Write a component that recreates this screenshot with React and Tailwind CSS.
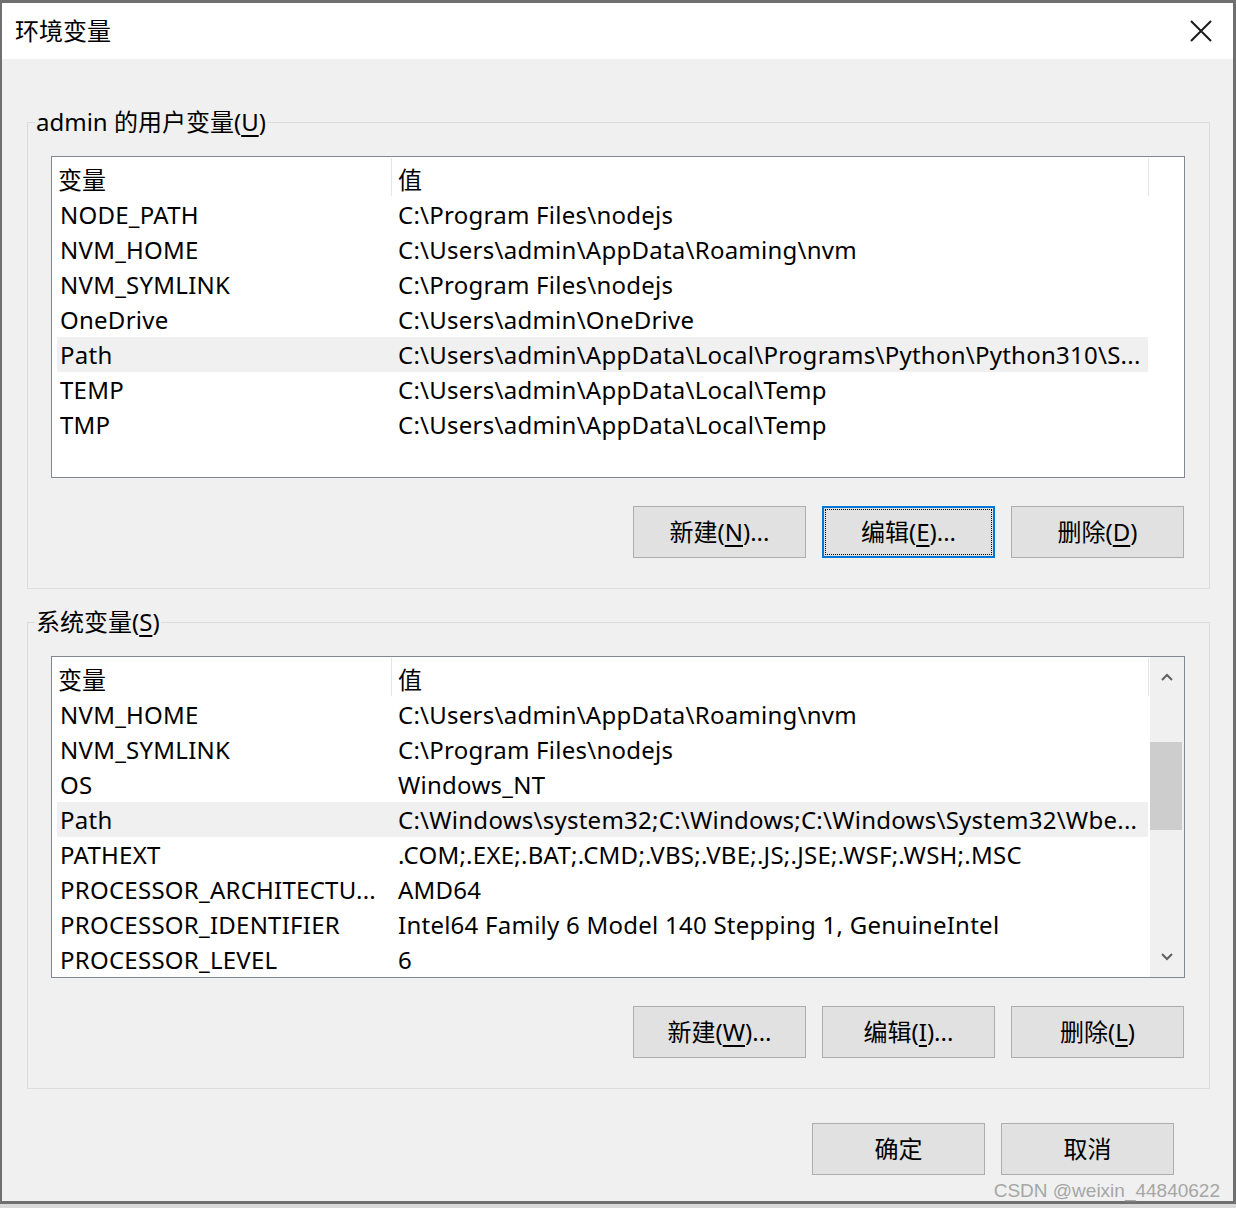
import React from "react";

const FONT = { fontFamily: '"Noto Sans", "Noto Sans CJK SC", sans-serif' };

const userRows = [
  ["NODE_PATH", "C:\\Program Files\\nodejs"],
  ["NVM_HOME", "C:\\Users\\admin\\AppData\\Roaming\\nvm"],
  ["NVM_SYMLINK", "C:\\Program Files\\nodejs"],
  ["OneDrive", "C:\\Users\\admin\\OneDrive"],
  ["Path", "C:\\Users\\admin\\AppData\\Local\\Programs\\Python\\Python310\\S...", true],
  ["TEMP", "C:\\Users\\admin\\AppData\\Local\\Temp"],
  ["TMP", "C:\\Users\\admin\\AppData\\Local\\Temp"],
];

const sysRows = [
  ["NVM_HOME", "C:\\Users\\admin\\AppData\\Roaming\\nvm"],
  ["NVM_SYMLINK", "C:\\Program Files\\nodejs"],
  ["OS", "Windows_NT"],
  ["Path", "C:\\Windows\\system32;C:\\Windows;C:\\Windows\\System32\\Wbe...", true],
  ["PATHEXT", ".COM;.EXE;.BAT;.CMD;.VBS;.VBE;.JS;.JSE;.WSF;.WSH;.MSC"],
  ["PROCESSOR_ARCHITECTU...", "AMD64"],
  ["PROCESSOR_IDENTIFIER", "Intel64 Family 6 Model 140 Stepping 1, GenuineIntel"],
  ["PROCESSOR_LEVEL", "6"],
];

function Chevron({ up }) {
  return (
    <svg width="14" height="10" viewBox="0 0 14 10">
      <path
        d={up ? "M2 8 L7 3 L12 8" : "M2 2 L7 7 L12 2"}
        fill="none"
        stroke="#606060"
        strokeWidth="2"
      />
    </svg>
  );
}

function ListBox({ rows, scroll }) {
  return (
    <div className="flex h-[322px] w-[1134px] shrink-0 border border-[#828790] bg-white">
      <div className="flex w-[1098px] flex-col overflow-hidden">
        <div className="ml-[5px] flex h-[40px] w-[1092px] shrink-0 items-start text-[24px] text-black">
          <div className="h-[40px] w-[334px] pl-[1px] leading-[46px]">变量</div>
          <div className="mt-[1px] h-[38px] w-px bg-[#e5e5e5]" />
          <div className="h-[40px] flex-1 pl-[6px] leading-[46px]">值</div>
          <div className="mt-[1px] h-[38px] w-px bg-[#e5e5e5]" />
        </div>
        {rows.map(([k, v, sel]) => (
          <div
            key={k}
            className={
              "ml-[5px] flex h-[35px] w-[1091px] shrink-0 items-center whitespace-nowrap text-[24px] leading-[35px] tracking-[0.25px] text-black " +
              (sel ? "bg-[#f0f0f0]" : "")
            }
          >
            <div className="w-[334px] overflow-hidden pl-[3px]">{k}</div>
            <div className="flex-1 overflow-hidden pl-[7px]">{v}</div>
          </div>
        ))}
      </div>
      {scroll && (
        <div className="ml-auto flex w-[34px] flex-col items-center bg-[#f0f0f0]">
          <div className="flex h-[40px] w-full items-center justify-center">
            <Chevron up />
          </div>
          <div className="mt-[45px] h-[88px] w-[32px] self-start bg-[#cdcdcd]" />
          <div className="flex-1" />
          <div className="flex h-[40px] w-full items-center justify-center">
            <Chevron />
          </div>
        </div>
      )}
    </div>
  );
}

function Btn({ children, focused }) {
  if (focused) {
    return (
      <div className="flex h-[52px] w-[173px] items-center justify-center border-2 border-[#0078d7] bg-[#e1e1e1] p-[1px]">
        <div className="flex h-full w-full items-center justify-center border border-dotted border-black text-[24px] text-black">
          {children}
        </div>
      </div>
    );
  }
  return (
    <div className="flex h-[52px] w-[173px] items-center justify-center border border-[#adadad] bg-[#e1e1e1] text-[24px] text-black">
      {children}
    </div>
  );
}

function Group({ label, rows, scroll, btns, focusIdx, className }) {
  return (
    <fieldset
      className={
        "ml-[25px] w-[1183px] min-w-0 border border-[#dcdcdc] pl-[23px] pr-[24px] pb-[30px] pt-[19px] " +
        className
      }
    >
      <legend className="-ml-[16px] px-px text-[24px] leading-[30px] text-black">{label}</legend>
      <ListBox rows={rows} scroll={scroll} />
      <div className="mr-px mt-[28px] flex justify-end gap-[16px]">
        {btns.map((b, i) => (
          <Btn key={i} focused={i === focusIdx}>
            {b}
          </Btn>
        ))}
      </div>
    </fieldset>
  );
}

export default function App() {
  return (
    <div className="relative h-[1208px] w-[1236px] bg-[#dadada]" style={FONT}>
      <div className="flex h-[1204px] w-[1236px] flex-col border-b-[3px] border-l-2 border-r-[3px] border-t-[3px] border-[#6f6f6f] bg-[#f0f0f0]">
        <div className="flex h-[56px] shrink-0 items-center justify-between bg-white pl-[13px] pr-[20px]">
          <span className="text-[24px] text-black">环境变量</span>
          <svg width="24" height="24" viewBox="0 0 24 24">
            <path d="M2 2 L22 22 M22 2 L2 22" stroke="#1a1a1a" strokeWidth="2" />
          </svg>
        </div>
        <Group
          className="mt-[48px]"
          label={
            <>
              admin 的用户变量(<u className="underline-offset-4">U</u>)
            </>
          }
          rows={userRows}
          btns={[
            <>新建(<u className="underline-offset-4">N</u>)...</>,
            <>编辑(<u className="underline-offset-4">E</u>)...</>,
            <>删除(<u className="underline-offset-4">D</u>)</>,
          ]}
          focusIdx={1}
        />
        <Group
          className="mt-[18px]"
          label={
            <>
              系统变量(<u className="underline-offset-4">S</u>)
            </>
          }
          rows={sysRows}
          scroll
          btns={[
            <>新建(<u className="underline-offset-4">W</u>)...</>,
            <>编辑(<u className="underline-offset-4">I</u>)...</>,
            <>删除(<u className="underline-offset-4">L</u>)</>,
          ]}
          focusIdx={-1}
        />
        <div className="mr-[59px] mt-[34px] flex justify-end gap-[16px]">
          <Btn>确定</Btn>
          <Btn>取消</Btn>
        </div>
      </div>
      <div
        className="absolute bottom-[8px] right-[16px] text-[19px] leading-none text-[#a6a6a6]"
        style={{ fontFamily: '"Liberation Sans", Arial, sans-serif' }}
      >
        CSDN @weixin_44840622
      </div>
    </div>
  );
}
